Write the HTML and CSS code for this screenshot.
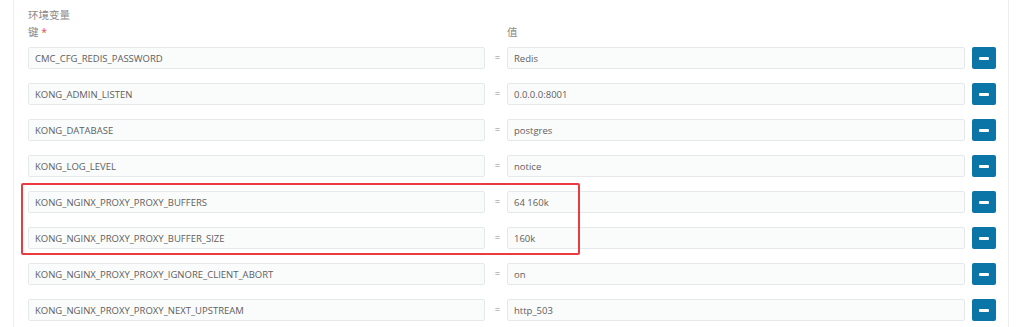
FILE: index.html
```html
<!DOCTYPE html>
<html lang="zh-CN">

<head>
  <meta charset="utf-8">
  <title>环境变量</title>
  <link rel="stylesheet" href="styles.css">
</head>

<body>
  <div id="panel">
    <div class="section-title">环境变量</div>
    <div class="env-grid">
      <label class="col-label">键 <span class="req">*</span></label>
      <span></span>
      <label class="col-label">值</label>
      <span></span>

      <input class="field" value="CMC_CFG_REDIS_PASSWORD">
      <span class="eq">=</span>
      <input class="field" value="Redis">
      <button class="remove"><i></i></button>

      <input class="field" value="KONG_ADMIN_LISTEN">
      <span class="eq">=</span>
      <input class="field" value="0.0.0.0:8001">
      <button class="remove"><i></i></button>

      <input class="field" value="KONG_DATABASE">
      <span class="eq">=</span>
      <input class="field" value="postgres">
      <button class="remove"><i></i></button>

      <input class="field" value="KONG_LOG_LEVEL">
      <span class="eq">=</span>
      <input class="field" value="notice">
      <button class="remove"><i></i></button>

      <input class="field" value="KONG_NGINX_PROXY_PROXY_BUFFERS">
      <span class="eq">=</span>
      <input class="field" value="64 160k">
      <button class="remove"><i></i></button>

      <input class="field" value="KONG_NGINX_PROXY_PROXY_BUFFER_SIZE">
      <span class="eq">=</span>
      <input class="field" value="160k">
      <button class="remove"><i></i></button>

      <input class="field" value="KONG_NGINX_PROXY_PROXY_IGNORE_CLIENT_ABORT">
      <span class="eq">=</span>
      <input class="field" value="on">
      <button class="remove"><i></i></button>

      <input class="field" value="KONG_NGINX_PROXY_PROXY_NEXT_UPSTREAM">
      <span class="eq">=</span>
      <input class="field" value="http_503">
      <button class="remove"><i></i></button>
    </div>
    <div id="highlight"></div>
  </div>
</body>

</html>
```

FILE: styles.css
```css
* {
  box-sizing: border-box;
  margin: 0;
  padding: 0
}

html {
  font-family: 'Open Sans', 'Noto Sans CJK SC', sans-serif;
  font-size: 9.5px;
  color: #5f5f5f;
  background: #fff
}

body {
  height: 327px;
  overflow: hidden
}

#panel {
  position: relative;
  margin-left: 13px;
  width: 996px;
  height: 100%;
  border-left: 1px solid #eceeee;
  border-right: 1px solid #eceeee;
  padding: 8px 11px 0 14px
}

.section-title {
  font-size: 10.5px;
  color: #8a8a8a;
  line-height: 14px;
  height: 17px
}

.env-grid {
  display: grid;
  grid-template-columns: 457px 22px 458px 31px;
  row-gap: 14px
}

.col-label {
  font-size: 10.5px;
  color: #8a8a8a;
  line-height: 14px;
  margin-bottom: -6px
}

.req {
  color: #e2484d
}

.field {
  height: 22px;
  padding: 0 6px;
  border: 1px solid #e6e9e9;
  border-radius: 2px;
  background: #fafbfb;
  font: inherit;
  color: #5f5f5f;
  outline: none
}

.eq {
  text-align: center;
  line-height: 22px;
  color: #888;
  padding-left: 3px
}

.remove {
  justify-self: end;
  width: 24px;
  height: 22px;
  border: none;
  border-radius: 2px;
  background: #0b75a8;
  display: flex;
  align-items: center;
  justify-content: center
}

.remove i {
  display: block;
  width: 10px;
  height: 3px;
  border-radius: 1px;
  background: #fff
}

#highlight {
  position: absolute;
  left: 7px;
  top: 183px;
  width: 559px;
  height: 72px;
  border: 2px solid #ea3b40;
  border-radius: 2px;
  pointer-events: none
}
```
